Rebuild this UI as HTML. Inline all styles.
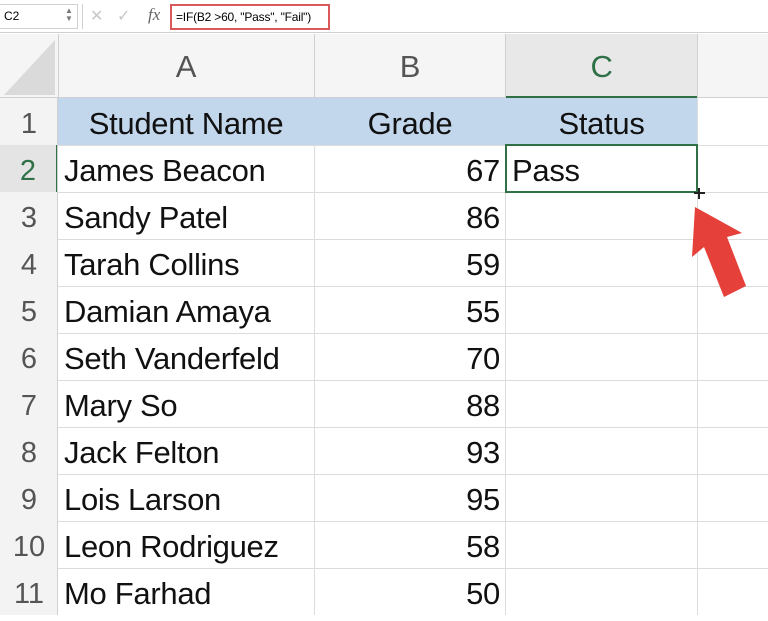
<!DOCTYPE html>
<html><head><style>
*{margin:0;padding:0;box-sizing:border-box}
body{width:768px;height:615px;overflow:hidden;background:#fff;font-family:"Liberation Sans",sans-serif;position:relative}
.a{position:absolute}
.c{position:absolute;height:47px;line-height:51px;font-size:31px;color:#111;white-space:nowrap;letter-spacing:-0.3px}
.rn{position:absolute;left:0;width:58px;height:47px;line-height:53px;font-size:29px;color:#555;text-align:center;background:#f3f3f3}
.hl{position:absolute;left:58px;width:710px;height:1px;background:#dcdcdc}
.vl{position:absolute;width:1px;background:#dcdcdc}
</style></head><body>
<div class="a" style="left:0;top:0;width:768px;height:33px;background:#fff;border-bottom:1px solid #cfcfcf"></div>
<div class="a" style="left:0;top:4px;width:78px;height:25px;border:1px solid #d0d0d0;border-left:none;font-size:12px;line-height:23px;padding-left:4px;color:#000">C2</div>
<div class="a" style="left:65px;top:7px;font-size:8px;line-height:8px;color:#777">▲<br>▼</div>
<div class="a" style="left:82px;top:4px;width:1px;height:25px;background:#d0d0d0"></div>
<div class="a" style="left:90px;top:6px;font-size:16px;color:#c8c8c8">✕</div>
<div class="a" style="left:117px;top:6px;font-size:16px;color:#c8c8c8">✓</div>
<div class="a" style="left:148px;top:5px;font-size:17px;font-style:italic;font-family:'Liberation Serif',serif;color:#666">fx</div>
<div class="a" style="left:170px;top:4px;width:160px;height:26px;border:2px solid #d9585a;font-size:12px;line-height:22px;padding-left:4px;color:#000;letter-spacing:-0.2px">=IF(B2 &gt;60, "Pass", "Fail")</div>
<div class="a" style="left:0;top:34px;width:768px;height:64px;background:#f5f5f5;border-bottom:1px solid #d0d0d0"></div>
<svg class="a" style="left:0;top:34px" width="58" height="64"><polygon points="55,6 55,61 4,61" fill="#dadada"/></svg>
<div class="a" style="left:506px;top:34px;width:191px;height:64px;background:#e8e8e8;border-bottom:2px solid #2f7047"></div>
<div class="a" style="left:58px;top:34px;width:1px;height:64px;background:#d0d0d0"></div>
<div class="a" style="left:314px;top:34px;width:1px;height:64px;background:#d0d0d0"></div>
<div class="a" style="left:505px;top:34px;width:1px;height:64px;background:#d0d0d0"></div>
<div class="a" style="left:697px;top:34px;width:1px;height:64px;background:#d0d0d0"></div>
<div class="c" style="left:58px;top:34px;width:256px;height:64px;line-height:66px;text-align:center;color:#555">A</div>
<div class="c" style="left:314px;top:34px;width:192px;height:64px;line-height:66px;text-align:center;color:#555">B</div>
<div class="c" style="left:506px;top:34px;width:191px;height:64px;line-height:66px;text-align:center;color:#2f7047">C</div>
<div class="a" style="left:58px;top:98px;width:639px;height:47px;background:#c2d6ec"></div>
<div class="rn" style="top:98px">1</div>
<div class="rn" style="top:145px;color:#2f7047;background:#e4e4e4;border-right:2px solid #2f7047">2</div>
<div class="rn" style="top:192px">3</div>
<div class="rn" style="top:239px">4</div>
<div class="rn" style="top:286px">5</div>
<div class="rn" style="top:333px">6</div>
<div class="rn" style="top:380px">7</div>
<div class="rn" style="top:427px">8</div>
<div class="rn" style="top:474px">9</div>
<div class="rn" style="top:521px">10</div>
<div class="rn" style="top:568px">11</div>
<div class="a" style="left:57px;top:98px;width:1px;height:517px;background:#d0d0d0"></div>
<div class="hl" style="top:145px"></div><div class="hl" style="top:192px"></div><div class="hl" style="top:239px"></div>
<div class="hl" style="top:286px"></div><div class="hl" style="top:333px"></div><div class="hl" style="top:380px"></div>
<div class="hl" style="top:427px"></div><div class="hl" style="top:474px"></div><div class="hl" style="top:521px"></div>
<div class="hl" style="top:568px"></div>
<div class="vl" style="left:314px;top:145px;height:470px"></div>
<div class="vl" style="left:505px;top:145px;height:470px"></div>
<div class="vl" style="left:697px;top:98px;height:517px"></div>
<div class="c" style="left:58px;top:98px;width:256px;text-align:center">Student Name</div>
<div class="c" style="left:314px;top:98px;width:192px;text-align:center">Grade</div>
<div class="c" style="left:506px;top:98px;width:191px;text-align:center">Status</div>
<div class="c" style="left:64px;top:145px">James Beacon</div><div class="c" style="left:314px;top:145px;width:186px;text-align:right">67</div>
<div class="c" style="left:64px;top:192px">Sandy Patel</div><div class="c" style="left:314px;top:192px;width:186px;text-align:right">86</div>
<div class="c" style="left:64px;top:239px">Tarah Collins</div><div class="c" style="left:314px;top:239px;width:186px;text-align:right">59</div>
<div class="c" style="left:64px;top:286px">Damian Amaya</div><div class="c" style="left:314px;top:286px;width:186px;text-align:right">55</div>
<div class="c" style="left:64px;top:333px">Seth Vanderfeld</div><div class="c" style="left:314px;top:333px;width:186px;text-align:right">70</div>
<div class="c" style="left:64px;top:380px">Mary So</div><div class="c" style="left:314px;top:380px;width:186px;text-align:right">88</div>
<div class="c" style="left:64px;top:427px">Jack Felton</div><div class="c" style="left:314px;top:427px;width:186px;text-align:right">93</div>
<div class="c" style="left:64px;top:474px">Lois Larson</div><div class="c" style="left:314px;top:474px;width:186px;text-align:right">95</div>
<div class="c" style="left:64px;top:521px">Leon Rodriguez</div><div class="c" style="left:314px;top:521px;width:186px;text-align:right">58</div>
<div class="c" style="left:64px;top:568px">Mo Farhad</div><div class="c" style="left:314px;top:568px;width:186px;text-align:right">50</div>
<div class="a" style="left:505px;top:144px;width:193px;height:49px;border:2px solid #2f7047"></div>
<div class="c" style="left:512px;top:145px">Pass</div>
<div class="a" style="left:694px;top:192px;width:11px;height:2px;background:#222"></div>
<div class="a" style="left:698px;top:188px;width:2px;height:11px;background:#222"></div>
<svg class="a" style="left:680px;top:195px" width="88" height="110">
<polygon points="15,12 12,62 24,52 44,102 66,91 47,42 62,38" fill="#e6403a"/>
</svg>
</body></html>
